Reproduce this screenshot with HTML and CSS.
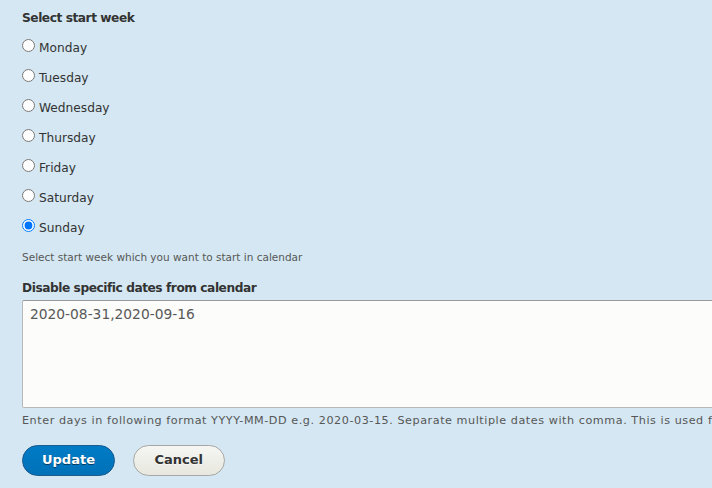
FILE: index.html
```html
<!DOCTYPE html>
<html lang="en">
<head>
<meta charset="utf-8">
<title>Calendar settings</title>
<link rel="stylesheet" href="styles.css">
</head>
<body>
<form class="form">
  <fieldset class="field">
    <div class="field-label">Select start week</div>
    <div class="radios">
      <label class="option"><input type="radio" name="week" value="monday">Monday</label>
      <label class="option"><input type="radio" name="week" value="tuesday">Tuesday</label>
      <label class="option"><input type="radio" name="week" value="wednesday">Wednesday</label>
      <label class="option"><input type="radio" name="week" value="thursday">Thursday</label>
      <label class="option"><input type="radio" name="week" value="friday">Friday</label>
      <label class="option"><input type="radio" name="week" value="saturday">Saturday</label>
      <label class="option"><input type="radio" name="week" value="sunday" checked>Sunday</label>
    </div>
    <div class="description">Select start week which you want to start in calendar</div>
  </fieldset>
  <div class="field field-dates">
    <label class="field-label" for="dates">Disable specific dates from calendar</label>
    <textarea id="dates" class="textarea">2020-08-31,2020-09-16</textarea>
    <div class="description description-wide">Enter days in following format YYYY-MM-DD e.g. 2020-03-15. Separate multiple dates with comma. This is used f</div>
  </div>
  <div class="actions">
    <button type="button" class="button button-primary">Update</button>
    <button type="button" class="button button-secondary">Cancel</button>
  </div>
</form>
</body>
</html>
```
FILE: styles.css
```css
html, body {
  margin: 0;
  padding: 0;
  background: #d4e7f2;
  overflow: hidden;
}
body {
  font-family: "DejaVu Sans", "Liberation Sans", sans-serif;
  font-size: 12.2px;
  color: #333333;
}
.form {
  width: 1100px;
  padding: 8px 0 0 22px;
}
.field {
  margin: 0;
  padding: 0;
  border: 0;
  min-width: 0;
}
.field-label {
  display: block;
  font-weight: bold;
  line-height: 20px;
  letter-spacing: -0.45px;
  color: #333333;
}
.radios {
  display: flex;
  flex-direction: column;
  gap: 10px;
  margin-top: 10px;
}
.option {
  display: block;
  line-height: 20px;
  height: 20px;
}
.option input {
  margin: 0 4px 0 0;
  width: 13px;
  height: 13px;
}
.description {
  font-size: 10.5px;
  line-height: 15px;
  color: #575757;
  margin-top: 12px;
  white-space: nowrap;
}
.field-dates {
  margin-top: 12.5px;
}
.textarea {
  display: block;
  box-sizing: border-box;
  width: 900px;
  height: 108px;
  margin: 2px 0 0 0;
  padding: 4px 7px;
  border: 1px solid #b8b8b8;
  border-top-color: #999999;
  border-radius: 2px;
  background: #fcfcfa;
  font-family: "DejaVu Sans", sans-serif;
  font-size: 13.8px;
  line-height: 18px;
  color: #595959;
  resize: none;
  outline: none;
}
.description-wide {
  margin-top: 5px;
  font-size: 11.2px;
  letter-spacing: 0.55px;
}
.actions {
  display: flex;
  gap: 18px;
  margin-top: 17px;
}
.button {
  box-sizing: border-box;
  height: 31px;
  padding: 4px 19px;
  border: 1px solid #a6a6a6;
  border-radius: 20em;
  background-color: #f2f1eb;
  background-image: linear-gradient(to bottom, #f6f6f3, #e7e7df);
  font-family: "DejaVu Sans", sans-serif;
  font-size: 13px;
  font-weight: bold;
  line-height: 20px;
  color: #333333;
  text-shadow: 0 1px rgba(255, 255, 255, 0.6);
  cursor: pointer;
}
.button-secondary {
  padding: 4px 20.5px;
}
.button-primary {
  border-color: #1e5c90;
  background-color: #0071b8;
  background-image: linear-gradient(to bottom, #007bc6, #0071b8);
  color: #ffffff;
  text-shadow: 0 1px rgba(0, 0, 0, 0.5);
}
```
